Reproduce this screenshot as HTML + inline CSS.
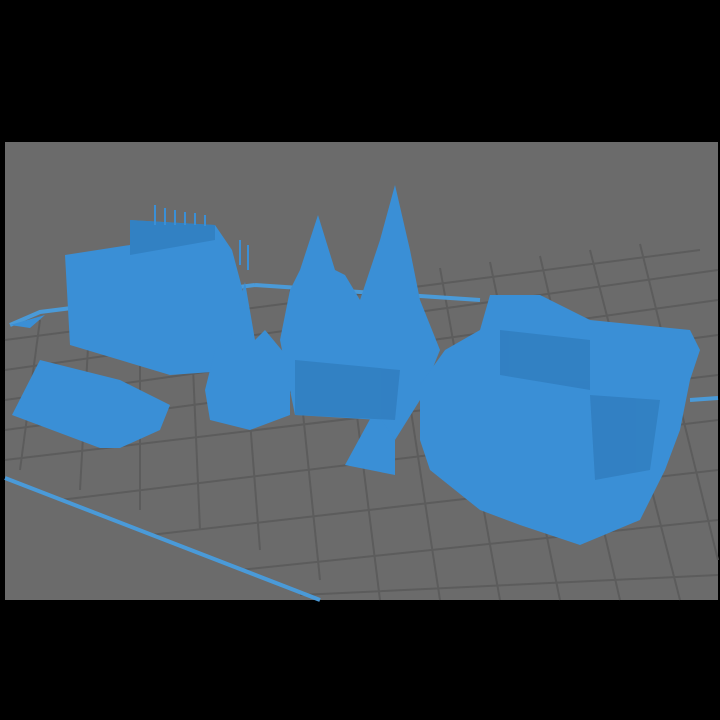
<!DOCTYPE html>
<html><head><style>html,body{margin:0;padding:0;background:#000;width:720px;height:720px;overflow:hidden}</style></head>
<body>
<svg width="720" height="720" viewBox="0 0 720 720" xmlns="http://www.w3.org/2000/svg">
<rect width="720" height="720" fill="#000"/>
<rect x="5" y="142" width="713" height="458" fill="#6b6b6b"/>
<g stroke="#5c5c5c" stroke-width="2" fill="none">
<path d="M5 340 L700 250 M5 370 L718 270 M5 400 L718 300 M5 430 L718 335 M5 460 L718 375 M60 500 L718 420 M150 535 L718 470 M240 570 L718 520 M300 595 L718 575"/>
<path d="M40 320 L20 470 M90 312 L80 490 M140 305 L140 510 M190 298 L200 530 M240 292 L260 550 M290 286 L320 580 M340 280 L380 600 M390 274 L440 600 M440 268 L500 600 M490 262 L560 600 M540 256 L620 600 M590 250 L680 600 M640 244 L718 560"/>
</g>
<g stroke="#4a9ad8" stroke-width="4" fill="none">
<path d="M5 478 L320 600"/>
<path d="M10 325 L40 312 L255 285 M255 285 L480 300"/>
<path d="M690 400 L718 398"/>
</g>
<g fill="#3a8fd6">
<polygon points="10,325 45,315 30,328"/>
<polygon points="65,255 130,245 130,220 215,225 232,250 240,280 245,300 240,370 170,375 70,345"/>
<polygon points="12,415 40,360 120,380 170,405 160,430 120,448 100,448"/>
<polygon points="205,390 215,350 230,340 245,282 255,340 265,330 290,360 290,415 250,430 210,420"/>
<polygon points="280,340 290,290 300,270 318,215 335,270 345,275 360,300 380,240 395,185 410,250 420,300 440,350 420,400 395,440 380,420 295,415"/>
<polygon points="345,465 375,410 395,440 395,475"/>
<polygon points="420,385 445,350 480,330 490,295 540,295 590,320 690,330 700,350 690,380 680,430 665,470 640,520 580,545 520,525 480,510 430,470 420,440"/>
</g>
<g fill="#2f7bbb" opacity="0.7">
<polygon points="130,220 215,225 215,240 130,255"/>
<polygon points="500,330 590,340 590,390 500,375"/>
<polygon points="295,360 400,370 395,420 295,415"/>
<polygon points="590,395 660,400 650,470 595,480"/>
</g>
<g stroke="#3a8fd6" stroke-width="2">
<path d="M155 225 V205 M165 225 V208 M175 225 V210 M185 225 V212 M195 225 V213 M205 226 V215 M240 265 V240 M248 270 V245"/>
</g>
</svg>
</body></html>
